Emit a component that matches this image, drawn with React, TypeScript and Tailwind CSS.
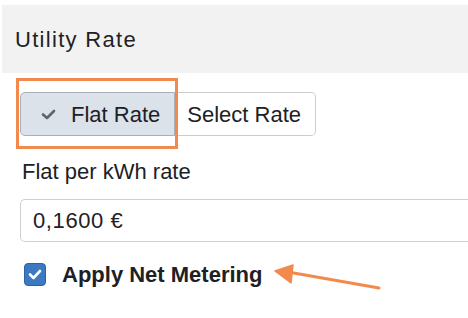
import React from "react";

const font = { fontFamily: '"Liberation Sans", Arial, sans-serif' };

function CheckIcon() {
  return (
    <svg width="15" height="11" viewBox="0 0 15 11" fill="none" stroke="#5b6572" strokeWidth="2.6" strokeLinecap="round" strokeLinejoin="round">
      <path d="M2 5.5l4 3.5 7-7" />
    </svg>
  );
}

export default function App() {
  return (
    <div className="relative w-[468px] h-[318px] bg-white text-[#1d2125] overflow-hidden" style={font}>
      {/* header */}
      <div className="mt-[5px] ml-[2px] h-[68px] bg-[#f2f2f2] flex items-center pl-[13px]">
        <h2 className="text-[22px] tracking-[1.3px] text-[#222]">Utility Rate</h2>
      </div>

      {/* rate type toggle */}
      <div className="mt-[19px] ml-[20px] flex h-[44px]">
        <button className="flex items-center gap-[15px] pl-[20px] pr-[14px] bg-[#dbe2e9] border border-[#a7afb8] rounded-l-[5px] text-[22px]">
          <CheckIcon />
          <span>Flat Rate</span>
        </button>
        <button className="pl-[12px] pr-[14px] bg-white border border-l-0 border-[#c9cdd1] rounded-r-[5px] text-[22px]">
          Select Rate
        </button>
      </div>

      {/* flat rate input */}
      <label className="block mt-[24px] ml-[22px] text-[22px] leading-[24px]">Flat per kWh rate</label>
      <div className="mt-[15px] ml-[20px] h-[43px] border border-[#cfd2d5] border-r-0 rounded-l-[5px] flex items-center pl-[12px]">
        <span className="text-[22px] tracking-[0.6px]">0,1600 €</span>
      </div>

      {/* net metering */}
      <div className="mt-[16px] ml-[24px] flex items-center gap-[16px]">
        <span className="w-[22px] h-[23px] rounded-[4px] bg-[#3b79c2] border border-[#2d62a3] flex items-center justify-center">
          <svg width="14" height="11" viewBox="0 0 14 11" fill="none" stroke="white" strokeWidth="2.6" strokeLinecap="round" strokeLinejoin="round">
            <path d="M2 5.5l3.5 3.5 6.5-7" />
          </svg>
        </span>
        <span className="text-[22px] font-bold">Apply Net Metering</span>
      </div>

      {/* annotation: highlight box */}
      <div className="absolute left-[16px] top-[78px] w-[162px] h-[71px] border-[3px] border-[#f28a4e] pointer-events-none" />

      {/* annotation: arrow */}
      <svg className="absolute left-0 top-0 pointer-events-none" width="468" height="318">
        <line x1="379" y1="288" x2="288" y2="272" stroke="#f28a4e" strokeWidth="3" strokeLinecap="round" />
        <polygon points="275,271 293,265 291,283" fill="#f28a4e" stroke="#f28a4e" strokeWidth="1.5" strokeLinejoin="round" />
      </svg>
    </div>
  );
}
